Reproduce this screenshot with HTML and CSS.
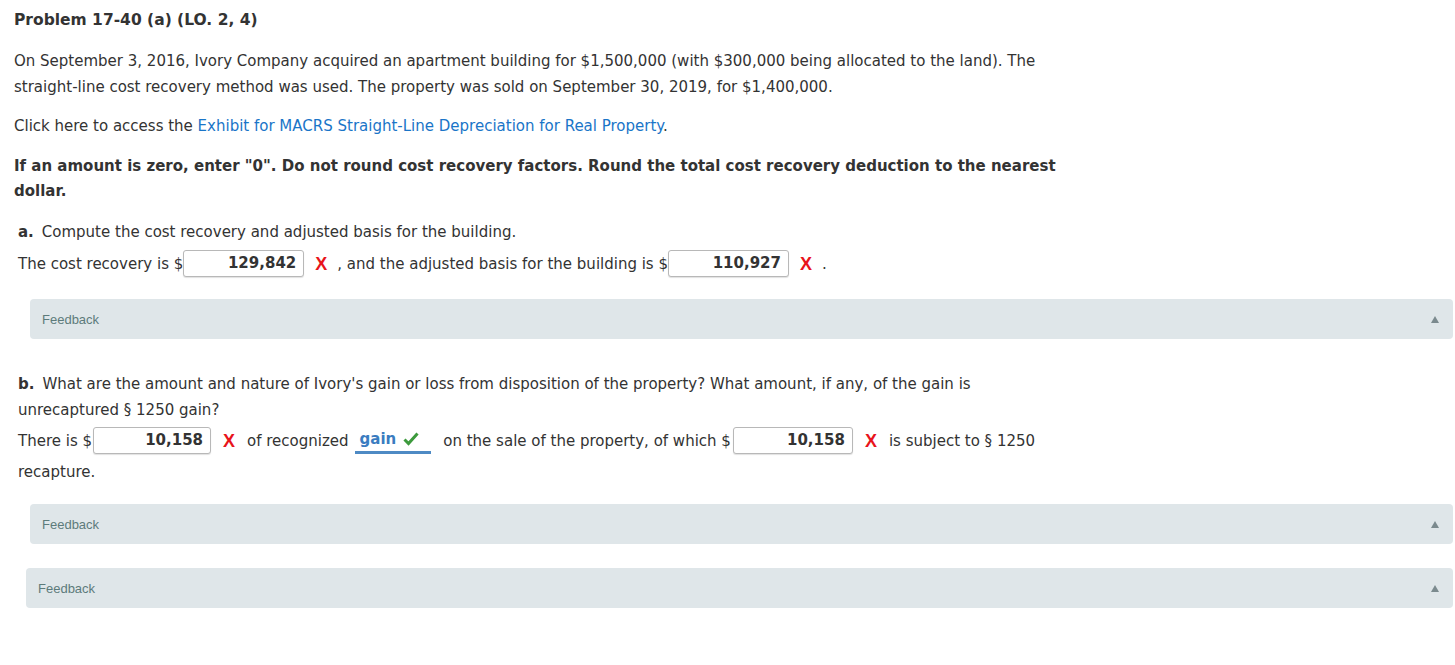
FILE: index.html
```html
<!DOCTYPE html>
<html>
<head>
<meta charset="utf-8">
<link rel="stylesheet" href="styles.css">
</head>
<body>
<div class="page">
  <h1 class="title">Problem 17-40 (a) (LO. 2, 4)</h1>
  <p class="para p1">On September 3, 2016, Ivory Company acquired an apartment building for $1,500,000 (with $300,000 being allocated to the land). The straight-line cost recovery method was used. The property was sold on September 30, 2019, for $1,400,000.</p>
  <p class="para p2">Click here to access the <a class="link" href="#">Exhibit for MACRS Straight-Line Depreciation for Real Property</a>.</p>
  <p class="para bold">If an amount is zero, enter "0". Do not round cost recovery factors. Round the total cost recovery deduction to the nearest dollar.</p>

  <div class="part part-a">
    <div class="q"><b class="lbl">a.</b>Compute the cost recovery and adjusted basis for the building.</div>
    <div class="answer-line">The cost recovery is $<span class="inp w1">129,842</span><span class="x">X</span>, and the adjusted basis for the building is $<span class="inp w1">110,927</span><span class="x">X</span>.</div>
  </div>
  <div class="feedback fb1"><span>Feedback</span><span class="tri"></span></div>

  <div class="part part-b">
    <div class="q"><b class="lbl">b.</b>What are the amount and nature of Ivory's gain or loss from disposition of the property? What amount, if any, of the gain is unrecaptured § 1250 gain?</div>
    <div class="answer-line first">There is $<span class="inp w2">10,158</span><span class="x xb">X</span>of recognized <span class="sel"><span class="selv">gain</span><svg class="check" width="16" height="14" viewBox="0 0 16 14"><path d="M1.5 7.5 L5.5 11.5 L14.5 1.5" fill="none" stroke="#3d9a3d" stroke-width="3"/></svg></span> on the sale of the property, of which $<span class="inp w3">10,158</span><span class="x xb">X</span>is subject to § 1250</div>
    <div class="answer-line last">recapture.</div>
  </div>
  <div class="feedback fb2"><span>Feedback</span><span class="tri"></span></div>
  <div class="feedback fb3"><span>Feedback</span><span class="tri"></span></div>
</div>
</body>
</html>
```
FILE: styles.css
```css
html, body { margin: 0; padding: 0; background: #fff; }
.page {
  font-family: "DejaVu Sans", Verdana, sans-serif;
  font-size: 15px;
  color: #333;
  padding: 9px 0 0 14px;
}
.title { font-size: 15.5px; font-weight: bold; margin: 0 0 17px 0; line-height: 22px; }
.para { margin: 0 0 13px 0; line-height: 26px; width: 1060px; }
.para.p2 { margin-bottom: 15px; }
.para.bold { font-weight: bold; line-height: 25px; margin-bottom: 15px; }
.link { color: #1a75c8; text-decoration: none; }
.part { padding-left: 4px; width: 1000px; }
.q { line-height: 26px; }
.lbl { margin-right: 8px; }
.answer-line { line-height: 26px; margin-top: 5px; display: flex; align-items: center; white-space: nowrap; width: max-content; }
.answer-line > * { flex-shrink: 0; }
.answer-line.first { margin-top: 4px; }
.inp {
  display: inline-block; box-sizing: border-box; height: 27px; line-height: 25px;
  border: 1px solid #b8b8b8; border-radius: 3px; text-align: right;
  font-weight: bold; padding-right: 7px; color: #333; background: #fff;
  box-shadow: 0 1px 1px rgba(0,0,0,0.12);
}
.w1 { width: 121px; }
.w2 { width: 118px; margin-left: 1px; }
.w3 { width: 120px; margin-left: 2px; }
.x { color: #e8141b; font-weight: bold; font-family: "Liberation Sans", Arial, sans-serif; font-size: 18px; margin: 0 10px 0 11px; }
.x.xb { margin: 0 12px 0 12px; }
.sel {
  display: inline-flex; align-items: center; margin-left: 6px; margin-right: 12px;
  border-bottom: 3px solid #4e8ac4; height: 24px; padding: 0 12px 0 5px;
}
.selv { color: #3a7cc0; font-weight: bold; margin-right: 7px; }
.check { display: block; }
.feedback {
  box-sizing: border-box; height: 40px; background: #dfe6e9; border-radius: 4px;
  font-family: "Liberation Sans", Arial, sans-serif; font-size: 13px; color: #5d7b7b;
  display: flex; align-items: center; justify-content: space-between; padding: 0 14px 0 12px;
}
.fb1 { margin: 22px 0 0 16px; width: 1423px; }
.fb2 { margin: 19px 0 0 16px; width: 1423px; }
.fb3 { margin: 24px 0 0 12px; width: 1427px; }
.tri { width: 0; height: 0; border-left: 4px solid transparent; border-right: 4px solid transparent; border-bottom: 7px solid #7b8a8e; }
.part-b { margin-top: 32px; }
```
